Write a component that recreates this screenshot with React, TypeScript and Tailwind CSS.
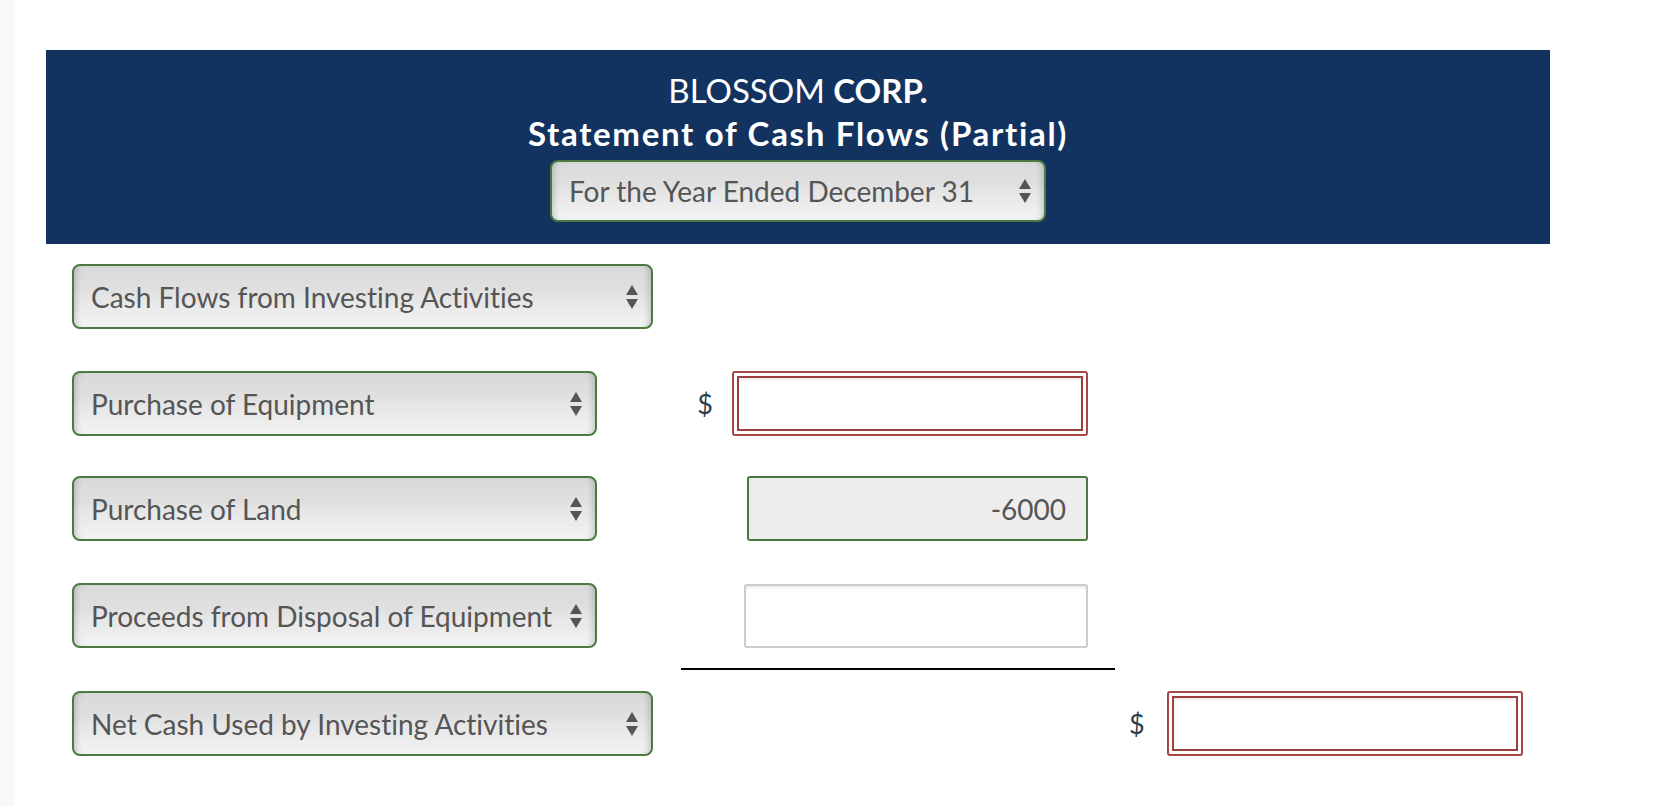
import React from "react";

const SELECT_BG =
  "bg-[linear-gradient(to_bottom,#d9d9d9_0%,#e0e0e0_40%,#e5e5e5_50%,#f3f3f3_100%)]";
const SELECT_SHADOW =
  "shadow-[inset_7px_0_6px_-5px_rgba(0,0,0,0.18),inset_-7px_0_6px_-5px_rgba(0,0,0,0.18)]";

function UpDown() {
  return (
    <svg width="12" height="24" viewBox="0 0 12 24" className="shrink-0">
      <polygon points="6,0 12,10 0,10" fill="#555555" />
      <polygon points="0,14 12,14 6,24" fill="#555555" />
    </svg>
  );
}

function Dropdown({ label, width, height = "h-[65px]" }: { label: string; width: string; height?: string }) {
  return (
    <div
      className={`${width} ${height} ${SELECT_BG} ${SELECT_SHADOW} border-2 border-[#4b7a3f] rounded-[8px] flex items-center justify-between pl-[17px] pr-[13px] text-[28px] text-[#555555] whitespace-nowrap`}
    >
      <span>{label}</span>
      <UpDown />
    </div>
  );
}

function RedBox({ width }: { width: string }) {
  return (
    <div className={`${width} h-[65px] border-2 border-[#a54848] rounded-[3px] p-[3px] bg-white`}>
      <div className="h-full border-2 border-[#9e3f3f] shadow-[inset_0_3px_3px_-1px_rgba(0,0,0,0.08)]" />
    </div>
  );
}

function Dollar() {
  return <span className="text-[27px] text-[#2c3e50] leading-none">$</span>;
}

export default function App() {
  return (
    <div className="min-h-screen flex bg-white font-['Lato',sans-serif] [font-variant-ligatures:none]">
      <div className="w-[15px] shrink-0 bg-[#f8f8f8]" />
      <div className="pl-[31px] pt-[50px]">
        {/* Header banner */}
        <div className="w-[1504px] h-[194px] bg-[#12335f] flex flex-col items-center pt-[20px] text-white">
          <div className="text-[33px] leading-[40px]">
            BLOSSOM <span className="font-bold">CORP.</span>
          </div>
          <div className="mt-[1px] text-[33px] leading-[44px] font-bold tracking-[1.7px]">
            Statement of Cash Flows (Partial)
          </div>
          <div className="mt-[5px]">
            <Dropdown label="For the Year Ended December 31" width="w-[496px]" height="h-[62px]" />
          </div>
        </div>

        {/* Statement rows */}
        <div className="pl-[26px] mt-[20px]">
          <div className="flex items-center h-[65px]">
            <Dropdown label="Cash Flows from Investing Activities" width="w-[581px]" />
          </div>

          <div className="flex items-center h-[65px] mt-[42px]">
            <div className="w-[609px] shrink-0">
              <Dropdown label="Purchase of Equipment" width="w-[525px]" />
            </div>
            <div className="w-[434px] shrink-0 flex items-center justify-end pr-[27px] gap-[19px]">
              <Dollar />
              <RedBox width="w-[356px]" />
            </div>
          </div>

          <div className="flex items-center h-[65px] mt-[40px]">
            <div className="w-[609px] shrink-0">
              <Dropdown label="Purchase of Land" width="w-[525px]" />
            </div>
            <div className="w-[434px] shrink-0 flex justify-end pr-[27px]">
              <div className="w-[341px] h-[65px] bg-[#ededed] border-2 border-[#4b7a3f] rounded-[3px] flex items-center justify-end pr-[20px] text-[28px] text-[#555555]">
                -6000
              </div>
            </div>
          </div>

          <div className="flex items-center h-[65px] mt-[42px]">
            <div className="w-[609px] shrink-0">
              <Dropdown label="Proceeds from Disposal of Equipment" width="w-[525px]" />
            </div>
            <div className="w-[434px] shrink-0 flex justify-end pr-[27px]">
              <div className="w-[344px] h-[64px] bg-white border-2 border-[#cccccc] rounded-[3px] shadow-[inset_0_3px_3px_-1px_rgba(0,0,0,0.08)]" />
            </div>
          </div>

          <div className="flex mt-[20px]">
            <div className="w-[609px] shrink-0" />
            <div className="w-[434px] h-[2px] bg-black" />
          </div>

          <div className="flex items-center h-[65px] mt-[21px]">
            <div className="w-[609px] shrink-0">
              <Dropdown label="Net Cash Used by Investing Activities" width="w-[581px]" />
            </div>
            <div className="w-[434px] shrink-0" />
            <div className="flex items-center pl-[14px] gap-[22px]">
              <Dollar />
              <RedBox width="w-[356px]" />
            </div>
          </div>
        </div>
      </div>
    </div>
  );
}
